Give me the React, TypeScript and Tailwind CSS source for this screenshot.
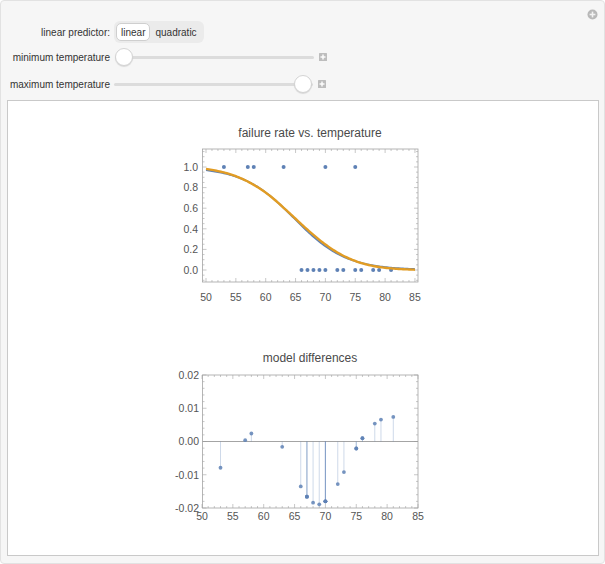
import React from "react";

const BLUE = "#5e81b5";
const ORANGE = "#e19c24";
const FRAME = "#a3a3a3";
const LABEL = "#555555";
const FONT = "'Liberation Sans', Arial, sans-serif";

const temps = [53, 57, 58, 63, 66, 67, 67, 67, 68, 69, 70, 70, 70, 70, 72, 73, 75, 75, 76, 76, 78, 79, 81];
const ones = [53, 57, 58, 63, 70, 75];
const zeros = [66, 67, 68, 69, 70, 72, 73, 75, 76, 78, 79, 81];

const diffPts: [number, number][] = [
  [50, -0.0125], [53, -0.008], [57, 0.0005], [58, 0.0025], [60, 0.0015], [63, -0.0015], [66, -0.0135], [67, -0.0165],
  [68, -0.0185], [69, -0.019], [70, -0.018], [72, -0.0127], [73, -0.009], [75, -0.002],
  [76, 0.001], [78, 0.0055], [79, 0.0067], [81, 0.0074], [85, 0.006],
];
const diffAt = (t: number) => {
  for (let i = 0; i < diffPts.length - 1; i++) {
    const [a, va] = diffPts[i];
    const [b, vb] = diffPts[i + 1];
    if (t >= a && t <= b) return va + ((vb - va) * (t - a)) / (b - a);
  }
  return 0;
};
const diffVal: Record<number, number> = {
  53: -0.0079, 57: 0.0004, 58: 0.0024, 63: -0.0016, 66: -0.0135, 67: -0.0166, 68: -0.0184,
  69: -0.0189, 70: -0.018, 72: -0.0128, 73: -0.0092, 75: -0.0021, 76: 0.001, 78: 0.0054, 79: 0.0066, 81: 0.0074,
};

const lin = (t: number) => 1 / (1 + Math.exp(-(15.0429 - 0.232163 * t)));

function FailureChart() {
  const X = (t: number) => 46 + (t - 50) * 5.97;
  const Y = (p: number) => 155 - p * 103;
  const L = 42.5, R = 258, T = 34, B = 167;
  let blue = "";
  let orange = "";
  for (let i = 0; i <= 140; i++) {
    const t = 50 + (i * 35) / 140;
    const pb = lin(t);
    const po = pb - diffAt(t);
    blue += (i === 0 ? "M" : "L") + X(t).toFixed(2) + " " + Y(pb).toFixed(2);
    orange += (i === 0 ? "M" : "L") + X(t).toFixed(2) + " " + Y(po).toFixed(2);
  }
  const xt: React.ReactNode[] = [];
  for (let t = 50; t <= 85; t++) {
    const major = t % 5 === 0;
    const len = major ? 4 : 2;
    const x = X(t);
    xt.push(<line key={"b" + t} x1={x} x2={x} y1={B} y2={B - len} stroke={FRAME} strokeWidth={0.6} />);
    xt.push(<line key={"t" + t} x1={x} x2={x} y1={T} y2={T + len} stroke={FRAME} strokeWidth={0.6} />);
    if (major)
      xt.push(
        <text key={"l" + t} x={x} y={186} textAnchor="middle" fontSize={10.5} fill={LABEL} fontFamily={FONT}>
          {t}
        </text>
      );
  }
  const yt: React.ReactNode[] = [];
  for (let k = -2; k <= 23; k++) {
    const p = k * 0.05;
    const y = Y(p);
    if (y > B || y < T) continue;
    const major = k % 4 === 0 && k >= 0 && k <= 20;
    const len = major ? 4 : 2;
    yt.push(<line key={"l" + k} x1={L} x2={L + len} y1={y} y2={y} stroke={FRAME} strokeWidth={0.6} />);
    yt.push(<line key={"r" + k} x1={R} x2={R - len} y1={y} y2={y} stroke={FRAME} strokeWidth={0.6} />);
    if (major)
      yt.push(
        <text key={"t" + k} x={38} y={y + 3.8} textAnchor="end" fontSize={10.5} fill={LABEL} fontFamily={FONT}>
          {p.toFixed(1)}
        </text>
      );
  }
  return (
    <svg width={280} height={190} className="block">
      <text x={150} y={22} textAnchor="middle" fontSize={12} fill="#4a4a4a" fontFamily={FONT}>
        failure rate vs. temperature
      </text>
      {xt}
      {yt}
      {ones.map((t) => (
        <circle key={"o" + t} cx={X(t)} cy={Y(1)} r={2} fill={BLUE} />
      ))}
      {zeros.map((t) => (
        <circle key={"z" + t} cx={X(t)} cy={Y(0)} r={2} fill={BLUE} />
      ))}
      <path d={blue} fill="none" stroke={BLUE} strokeWidth={1.8} />
      <path d={orange} fill="none" stroke={ORANGE} strokeWidth={2.4} />
      <rect x={L} y={T} width={R - L} height={B - T} fill="none" stroke={FRAME} strokeWidth={0.8} />
    </svg>
  );
}

function DiffChart() {
  const X = (t: number) => 42 + (t - 50) * 6.171;
  const Y = (v: number) => 101.5 - v * 3325;
  const L = 42.5, R = 258, T = 35, B = 168;
  const xt: React.ReactNode[] = [];
  for (let t = 50; t <= 85; t++) {
    const major = t % 5 === 0;
    const len = major ? 4 : 2;
    const x = X(t);
    xt.push(<line key={"b" + t} x1={x} x2={x} y1={B} y2={B - len} stroke={FRAME} strokeWidth={0.6} />);
    xt.push(<line key={"t" + t} x1={x} x2={x} y1={T} y2={T + len} stroke={FRAME} strokeWidth={0.6} />);
    if (major)
      xt.push(
        <text key={"l" + t} x={x} y={180} textAnchor="middle" fontSize={10.5} fill={LABEL} fontFamily={FONT}>
          {t}
        </text>
      );
  }
  const yt: React.ReactNode[] = [];
  for (let k = -10; k <= 10; k++) {
    const v = k * 0.002;
    const y = Y(v);
    const major = k % 5 === 0;
    const len = major ? 4 : 2;
    yt.push(<line key={"l" + k} x1={L} x2={L + len} y1={y} y2={y} stroke={FRAME} strokeWidth={0.6} />);
    yt.push(<line key={"r" + k} x1={R} x2={R - len} y1={y} y2={y} stroke={FRAME} strokeWidth={0.6} />);
    if (major)
      yt.push(
        <text key={"t" + k} x={39} y={y + 3.8} textAnchor="end" fontSize={10.5} fill={LABEL} fontFamily={FONT}>
          {k === 0 ? "0.00" : v.toFixed(2)}
        </text>
      );
  }
  return (
    <svg width={280} height={190} className="block">
      <text x={150} y={22} textAnchor="middle" fontSize={12} fill="#4a4a4a" fontFamily={FONT}>
        model differences
      </text>
      {xt}
      {yt}
      <line x1={L} x2={R} y1={Y(0)} y2={Y(0)} stroke="#9a9a9a" strokeWidth={0.9} />
      {temps.map((t, i) => (
        <line key={"s" + i} x1={X(t)} x2={X(t)} y1={Y(0)} y2={Y(diffVal[t])} stroke={BLUE} strokeOpacity={0.3} strokeWidth={1} />
      ))}
      {temps.map((t, i) => (
        <circle key={"c" + i} cx={X(t)} cy={Y(diffVal[t])} r={1.9} fill={BLUE} fillOpacity={0.85} />
      ))}
      <rect x={L} y={T} width={R - L} height={B - T} fill="none" stroke={FRAME} strokeWidth={0.8} />
    </svg>
  );
}

function PlusBox() {
  return (
    <svg width={8} height={8} className="block">
      <rect x={0} y={0} width={8} height={8} rx={0.5} fill="#bdbdbd" />
      <rect x={3.3} y={1.5} width={1.4} height={5} fill="#fff" />
      <rect x={1.5} y={3.3} width={5} height={1.4} fill="#fff" />
    </svg>
  );
}

function Slider({ pos }: { pos: number }) {
  return (
    <div className="flex items-center gap-[5px]">
      <div className="relative w-[199px] h-[18px] flex items-center">
        <div className="w-full h-[3px] rounded-full bg-[#dcdcdc]" />
        <div
          className="absolute top-0 w-[18px] h-[18px] rounded-full bg-white border border-[#d4d4d4] shadow-[0_1px_1px_rgba(0,0,0,0.12)]"
          style={{ left: pos }}
        />
      </div>
      <PlusBox />
    </div>
  );
}

export default function App() {
  return (
    <div
      className="w-[605px] h-[564px] bg-[#f6f6f6] border border-[#e2e2e2] rounded-[4px] relative flex flex-col"
      style={{ fontFamily: FONT }}
    >
      <svg width={11} height={11} className="absolute right-[6px] top-[8px]">
        <circle cx={5.5} cy={5.5} r={5} fill="#b8b8b8" />
        <rect x={4.7} y={2.6} width={1.6} height={5.8} fill="#f2f2f2" />
        <rect x={2.6} y={4.7} width={5.8} height={1.6} fill="#f2f2f2" />
      </svg>
      <div className="grid grid-cols-[109px_1fr] gap-x-[4px] items-center mt-[20px] text-[10px] text-[#333]">
        <div className="text-right">linear predictor:</div>
        <div className="flex">
          <div className="flex items-center h-[22px] rounded-[6px] bg-[#ebebeb] px-[2px]">
            <div className="h-[18px] px-[4px] flex items-center bg-white border border-[#cfcfcf] rounded-[5px]">linear</div>
            <div className="h-[18px] px-[5px] flex items-center">quadratic</div>
          </div>
        </div>
        <div className="text-right mt-[5px]">minimum temperature</div>
        <div className="mt-[5px] pl-[1px]">
          <Slider pos={0} />
        </div>
        <div className="text-right mt-[9px]">maximum temperature</div>
        <div className="mt-[9px]">
          <Slider pos={180} />
        </div>
      </div>
      <div className="ml-[6px] mt-[7px] w-[592px] h-[456px] bg-white border border-[#c9c9c9]">
        <div className="ml-[152px] mt-[14px]">
          <FailureChart />
        </div>
        <div className="ml-[152px] mt-[35px]">
          <DiffChart />
        </div>
      </div>
    </div>
  );
}
